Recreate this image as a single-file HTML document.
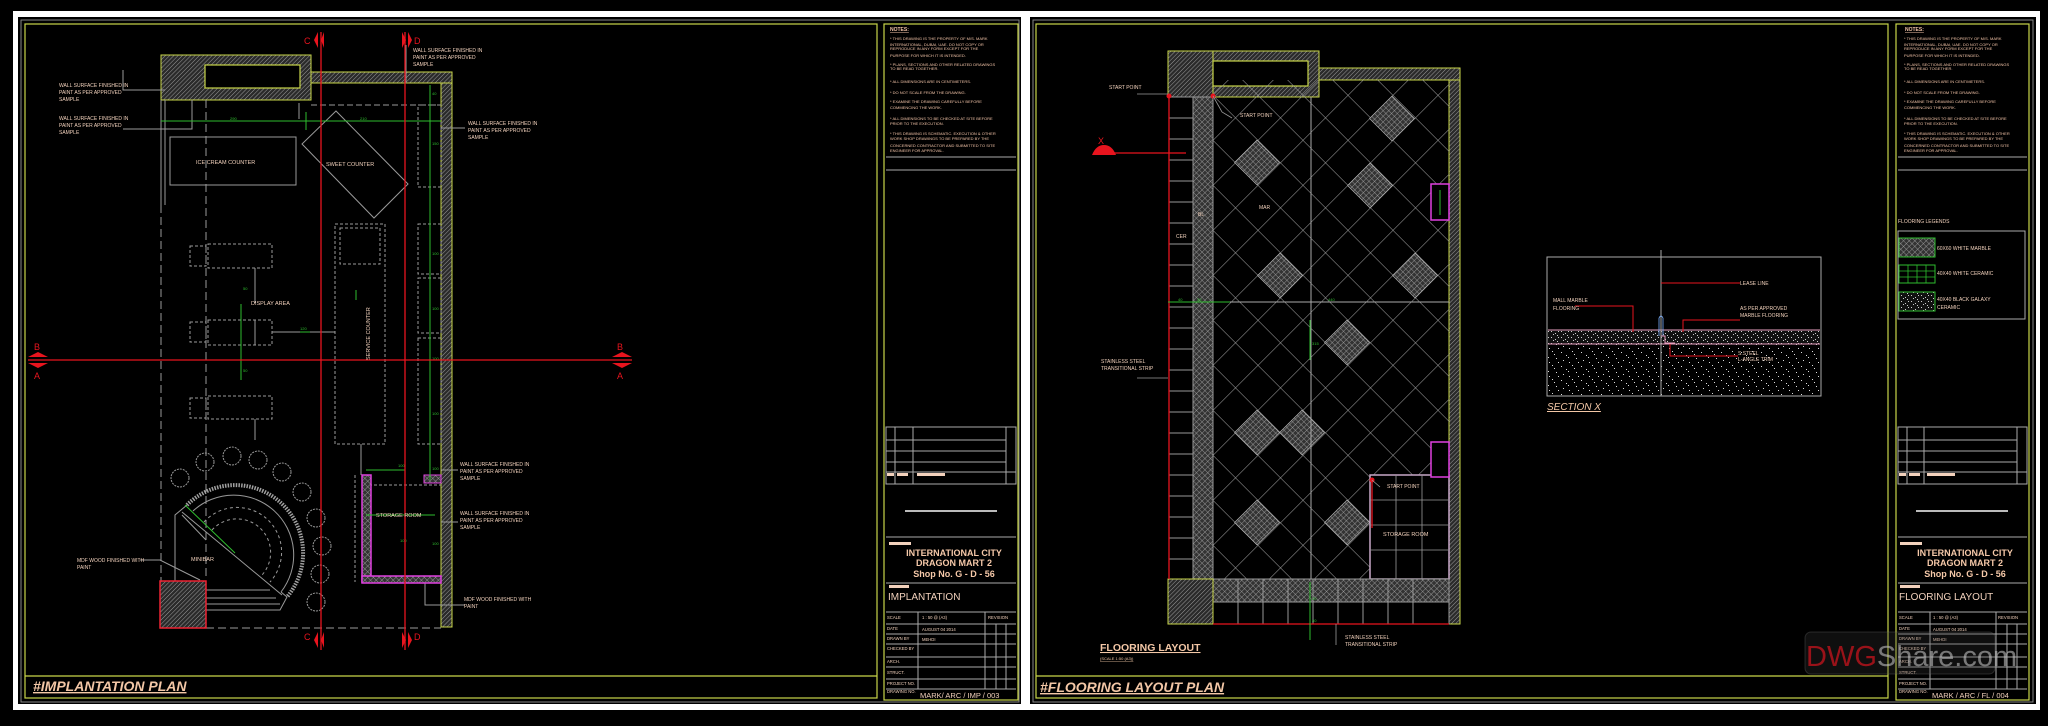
<!DOCTYPE html>
<html><head><meta charset="utf-8"><style>
html,body{margin:0;padding:0;background:#000;width:2048px;height:726px;overflow:hidden}
svg{display:block}
text{font-family:"Liberation Sans",sans-serif}
.lb{fill:#f3d2bd;font-size:5px}
.nt{fill:#f3c4a8;font-size:4px}
.tb{fill:#f3d2bd;font-size:4.2px}
</style></head><body>
<svg width="2048" height="726" viewBox="0 0 2048 726" xmlns="http://www.w3.org/2000/svg">
<defs>
<pattern id="hatch" width="3" height="3" patternUnits="userSpaceOnUse" patternTransform="rotate(45)">
<rect width="3" height="3" fill="#2a2a2a"/><line x1="0" y1="0" x2="0" y2="3" stroke="#9a9a9a" stroke-width="1"/></pattern>
<pattern id="cross" width="4" height="4" patternUnits="userSpaceOnUse" patternTransform="rotate(45)">
<rect width="4" height="4" fill="#333"/><path d="M0 0V4M0 0H4" stroke="#aaa" stroke-width="0.8"/></pattern>
<pattern id="speck" width="20" height="14" patternUnits="userSpaceOnUse">
<rect width="20" height="14" fill="#000"/>
<g fill="#ddd"><rect x="1" y="2" width="1" height="1"/><rect x="6" y="5" width="1" height="1"/><rect x="12" y="1" width="1" height="1"/><rect x="16" y="8" width="1" height="1"/><rect x="3" y="10" width="1" height="1"/><rect x="9" y="12" width="1" height="1"/><rect x="14" y="4" width="1" height="1"/><rect x="18" y="12" width="1" height="1"/><rect x="8" y="7" width="1" height="1"/></g></pattern>
<pattern id="speck2" width="10" height="6" patternUnits="userSpaceOnUse">
<rect width="10" height="6" fill="#111"/><g fill="#ccc"><rect x="1" y="1" width="1" height="1"/><rect x="5" y="3" width="1" height="1"/><rect x="8" y="1" width="1" height="1"/><rect x="3" y="4" width="1" height="1"/><rect x="7" y="5" width="1" height="1"/></g></pattern>
<pattern id="diag" width="31.82" height="31.82" patternUnits="userSpaceOnUse" patternTransform="translate(1258,140) rotate(45)">
<path d="M0 0H31.82M0 0V31.82" stroke="#a8a8a8" stroke-width="1" fill="none"/></pattern>
<clipPath id="floorclip"><rect x="1213" y="80" width="236" height="499"/></clipPath>
</defs>

<rect x="13" y="11" width="2027" height="699" fill="#fff"/>
<rect x="18" y="17" width="1003" height="687" fill="#000"/>
<rect x="1030" y="17" width="1006" height="687" fill="#000"/>
<rect x="21" y="20" width="998" height="682" fill="none" stroke="#888" stroke-width="1"/>
<rect x="1033" y="20" width="1000" height="682" fill="none" stroke="#888" stroke-width="1"/>

<!-- LEFT PANEL -->
<g fill="none" stroke="#c9d64a" stroke-width="1.2">
<rect x="25" y="24" width="852" height="674"/>
<line x1="25" y1="676" x2="877" y2="676"/>
<rect x="884" y="24" width="134" height="676"/>
</g>
<text x="33" y="691" fill="#f3c7a6" font-size="14" font-weight="bold" font-style="italic" text-decoration="underline">#IMPLANTATION PLAN</text>

<g stroke="#aaa" stroke-width="1" fill="none">
<line x1="886" y1="157" x2="1016" y2="157"/><line x1="886" y1="170" x2="1016" y2="170"/>
<rect x="886" y="427" width="130" height="57"/>
<line x1="886" y1="440" x2="1006" y2="440"/><line x1="886" y1="451" x2="1006" y2="451"/><line x1="886" y1="462" x2="1006" y2="462"/><line x1="886" y1="472" x2="1016" y2="472"/>
<line x1="895" y1="427" x2="895" y2="484"/><line x1="913" y1="427" x2="913" y2="484"/><line x1="1006" y1="427" x2="1006" y2="484"/>
<line x1="886" y1="537" x2="1016" y2="537"/><line x1="886" y1="583" x2="1016" y2="583"/><line x1="886" y1="612" x2="1016" y2="612"/>
<line x1="886" y1="624" x2="1016" y2="624"/><line x1="886" y1="634" x2="1016" y2="634"/><line x1="886" y1="644" x2="1016" y2="644"/><line x1="886" y1="657" x2="1016" y2="657"/><line x1="886" y1="667" x2="1016" y2="667"/><line x1="886" y1="679" x2="1016" y2="679"/><line x1="886" y1="689" x2="1016" y2="689"/>
<line x1="918" y1="612" x2="918" y2="689"/><line x1="985" y1="612" x2="985" y2="689"/><line x1="996" y1="624" x2="996" y2="689"/><line x1="1006" y1="624" x2="1006" y2="689"/>
</g>
<rect x="887" y="473" width="7" height="3" fill="#f3d2bd"/><rect x="897" y="473" width="11" height="3" fill="#f3d2bd"/><rect x="917" y="473" width="28" height="3" fill="#f3d2bd"/>
<line x1="905" y1="511" x2="997" y2="511" stroke="#bbb" stroke-width="2"/>
<rect x="889" y="542" width="22" height="3" fill="#f3d2bd"/><rect x="889" y="585" width="20" height="3" fill="#f3d2bd"/>
<g fill="#f6c9a9" font-weight="bold" font-size="9" text-anchor="middle">
<text x="954" y="556">INTERNATIONAL CITY</text><text x="954" y="566">DRAGON MART 2</text><text x="954" y="577">Shop No. G - D - 56</text></g>
<text x="888" y="600" fill="#f3d2bd" font-size="10">IMPLANTATION</text>
<g class="tb" font-size="3.5"><text x="887" y="619">SCALE</text><text x="922" y="619">1 : 50 @ (A3)</text><text x="988" y="619">REVISION</text>
<text x="887" y="630">DATE</text><text x="922" y="631">AUGUST 04 2014</text><text x="887" y="640">DRAWN BY</text><text x="922" y="641">MEHDI</text>
<text x="887" y="650">CHECKED BY</text><text x="887" y="663">ARCH.</text><text x="887" y="674">STRUCT.</text><text x="887" y="685">PROJECT NO.</text><text x="887" y="693">DRAWING NO.</text></g>
<text x="920" y="698" fill="#f3d2bd" font-size="7.5">MARK/ ARC / IMP / 003</text>

<g class="nt">
<text x="890" y="31" font-size="5" font-weight="bold" text-decoration="underline">NOTES:</text>
<text x="890" y="40">* THIS DRAWING IS THE PROPERTY OF M/S. MARK</text>
<text x="890" y="46">INTERNATIONAL, DUBAI, UAE. DO NOT COPY OR</text>
<text x="890" y="50">REPRODUCE IN ANY FORM EXCEPT FOR THE</text>
<text x="890" y="57">PURPOSE FOR WHICH IT IS INTENDED.</text>
<text x="890" y="66">* PLANS, SECTIONS AND OTHER RELATED DRAWINGS</text>
<text x="890" y="70">TO BE READ TOGETHER.</text>
<text x="890" y="83">* ALL DIMENSIONS ARE IN CENTIMETERS.</text>
<text x="890" y="94">* DO NOT SCALE FROM THE DRAWING.</text>
<text x="890" y="103">* EXAMINE THE DRAWING CAREFULLY BEFORE</text>
<text x="890" y="109">COMMENCING THE WORK.</text>
<text x="890" y="120">* ALL DIMENSIONS TO BE CHECKED AT SITE BEFORE</text>
<text x="890" y="125">PRIOR TO THE EXECUTION.</text>
<text x="890" y="135">* THIS DRAWING IS SCHEMATIC. EXECUTION &amp; OTHER</text>
<text x="890" y="140">WORK SHOP DRAWINGS TO BE PREPARED BY THE</text>
<text x="890" y="147">CONCERNED CONTRACTOR AND SUBMITTED TO SITE</text>
<text x="890" y="152">ENGINEER FOR APPROVAL.</text>
</g>

<rect x="161" y="55" width="150" height="45" fill="url(#hatch)" stroke="#c9d64a" stroke-width="1"/>
<rect x="205" y="65" width="95" height="23" fill="#000" stroke="#c9d64a" stroke-width="1.2"/>
<rect x="311" y="72" width="141" height="11" fill="url(#hatch)" stroke="#c9d64a" stroke-width="1"/>
<rect x="441" y="83" width="11" height="544" fill="url(#hatch)" stroke="#c9d64a" stroke-width="1"/>
<g stroke="#9a9a9a" stroke-width="1" fill="none">
<path d="M161 100V205M165 100V205"/>
<path d="M161 205V628M206 100V580" stroke-dasharray="8 4"/>
<path d="M206 628H441" stroke-dasharray="8 4"/>
<path d="M311 105H441" stroke-dasharray="6 3"/>
<rect x="170" y="137" width="126" height="48"/>
<path d="M336 111L408 184L374 218L302 144Z"/>
<g stroke-dasharray="3 2"><rect x="208" y="244" width="64" height="24"/><rect x="208" y="320" width="64" height="25"/><rect x="208" y="396" width="64" height="23"/>
<rect x="335" y="224" width="50" height="220"/><rect x="340" y="228" width="40" height="36"/><rect x="418" y="105" width="23" height="82"/><rect x="418" y="224" width="23" height="50"/><rect x="418" y="278" width="23" height="55"/><rect x="418" y="338" width="23" height="106"/>
<rect x="190" y="246" width="16" height="20"/><rect x="190" y="322" width="16" height="20"/><rect x="190" y="398" width="16" height="20"/>
<path d="M355 475V582M369 485H441"/></g>
<!-- minibar -->
<path d="M187 505 A68 68 0 0 1 287 597" stroke="#a0a0a0" stroke-dasharray="1.5 1.2" stroke-width="4"/>
<path d="M193 511 A60 60 0 0 1 281 592"/>
<path d="M204 522 A44 44 0 0 1 270 582" stroke-dasharray="3 3"/>
<path d="M212 530 A33 33 0 0 1 262 575" stroke-dasharray="3 3"/>
<path d="M187 505L175 515V585M182 515L206 540M182 512L282 595M281 592L287 597L280 610L206 610"/>
<path d="M206 590H270M206 598H276M206 604H280"/>
<g stroke-dasharray="2 1">
<circle cx="180" cy="478" r="9"/><circle cx="205" cy="462" r="9"/><circle cx="232" cy="456" r="9"/><circle cx="258" cy="460" r="9"/><circle cx="282" cy="472" r="9"/><circle cx="302" cy="492" r="9"/><circle cx="316" cy="518" r="9"/><circle cx="322" cy="546" r="9"/><circle cx="320" cy="574" r="9"/><circle cx="316" cy="602" r="9"/></g>
<path d="M165 90H123V70M192 100V129H123M299 103V119" />
<path d="M406 83V45M441 128H465M441 470H458M441 522H458M425 582V605H465M200 580L160 560H140"/>
<path d="M255 303L255 268M255 320L255 345M255 419L255 440M272 332H335M361 444V475"/>
</g>
<rect x="160" y="581" width="46" height="47" fill="url(#hatch)" stroke="#e23" stroke-width="1.5"/>
<rect x="362" y="475" width="9" height="107" fill="url(#cross)" stroke="#e040e0" stroke-width="1.5"/>
<rect x="362" y="576" width="79" height="7" fill="url(#cross)" stroke="#e040e0" stroke-width="1.5"/>
<rect x="424" y="475" width="17" height="8" fill="url(#cross)" stroke="#e040e0" stroke-width="1"/>
<g stroke="#2ebd2e" stroke-width="1" fill="none"><path d="M161 121H441M306 112V130M430 85V480M241 304V380M356 290V300M300 332H310M366 515H435M366 470H405M185 505L235 553"/></g>
<g fill="#2ebd2e" font-size="4"><text x="230" y="120">290</text><text x="360" y="120">210</text><text x="432" y="95">40</text><text x="432" y="145">150</text><text x="432" y="255">100</text><text x="432" y="310">100</text><text x="432" y="360">100</text><text x="432" y="415">100</text><text x="432" y="470">100</text><text x="432" y="545">100</text><text x="243" y="290">50</text><text x="243" y="372">50</text><text x="300" y="330">120</text><text x="398" y="467">100</text><text x="400" y="542">100</text></g>
<g stroke="#e8141e" stroke-width="1.3"><line x1="321" y1="32" x2="321" y2="650"/><line x1="405" y1="32" x2="405" y2="650"/><line x1="28" y1="360" x2="632" y2="360"/></g>
<g fill="#e8141e"><path d="M318 32L314 40L318 48ZM324 32V48L321 40Z"/><path d="M318 632L314 640L318 648ZM324 632V648L321 640Z"/><path d="M402 32V48L406 40Z M408 32L412 40L408 48Z"/><path d="M402 632V648L406 640Z M408 632L412 640L408 648Z"/>
<path d="M28 357L38 352L48 357ZM28 363L38 368L48 363Z"/><path d="M612 357L622 352L632 357ZM612 363L622 368L632 363Z"/></g>
<g fill="#e8141e" font-size="9"><text x="304" y="44">C</text><text x="414" y="44">D</text><text x="304" y="640">C</text><text x="414" y="640">D</text><text x="34" y="350">B</text><text x="34" y="379">A</text><text x="617" y="350">B</text><text x="617" y="379">A</text></g>
<g class="lb" font-size="4.6">
<text x="59" y="87">WALL SURFACE FINISHED IN</text><text x="59" y="94">PAINT AS PER APPROVED</text><text x="59" y="101">SAMPLE</text>
<text x="59" y="120">WALL SURFACE FINISHED IN</text><text x="59" y="127">PAINT AS PER APPROVED</text><text x="59" y="134">SAMPLE</text>
<text x="413" y="52">WALL SURFACE FINISHED IN</text><text x="413" y="59">PAINT AS PER APPROVED</text><text x="413" y="66">SAMPLE</text>
<text x="468" y="125">WALL SURFACE FINISHED IN</text><text x="468" y="132">PAINT AS PER APPROVED</text><text x="468" y="139">SAMPLE</text>
<text x="460" y="466">WALL SURFACE FINISHED IN</text><text x="460" y="473">PAINT AS PER APPROVED</text><text x="460" y="480">SAMPLE</text>
<text x="460" y="515">WALL SURFACE FINISHED IN</text><text x="460" y="522">PAINT AS PER APPROVED</text><text x="460" y="529">SAMPLE</text>
<text x="464" y="601">MDF WOOD FINISHED WITH</text><text x="464" y="608">PAINT</text>
<text x="77" y="562">MDF WOOD FINISHED WITH</text><text x="77" y="569">PAINT</text>
<text x="196" y="164" font-size="5.5">ICE CREAM COUNTER</text><text x="326" y="166" font-size="5.5">SWEET COUNTER</text>
<text x="251" y="305" font-size="5.5">DISPLAY AREA</text><text x="376" y="517" font-size="5.5">STORAGE ROOM</text><text x="191" y="561" font-size="5.5">MINIBAR</text>
<text transform="translate(370,360) rotate(-90)" font-size="5.5">SERVICE COUNTER</text>
</g>

<!-- RIGHT PANEL -->
<g fill="none" stroke="#c9d64a" stroke-width="1.2">
<rect x="1036" y="24" width="852" height="674"/>
<line x1="1036" y1="676" x2="1888" y2="676"/>
<rect x="1896" y="24" width="133" height="676"/>
</g>
<text x="1040" y="692" fill="#f3c7a6" font-size="14" font-weight="bold" font-style="italic" text-decoration="underline">#FLOORING LAYOUT PLAN</text>

<g stroke="#aaa" stroke-width="1" fill="none">
<line x1="1898" y1="157" x2="2027" y2="157"/><line x1="1898" y1="170" x2="2027" y2="170"/>
<rect x="1898" y="427" width="129" height="57"/>
<line x1="1898" y1="440" x2="2017" y2="440"/><line x1="1898" y1="451" x2="2017" y2="451"/><line x1="1898" y1="462" x2="2017" y2="462"/><line x1="1898" y1="472" x2="2027" y2="472"/>
<line x1="1907" y1="427" x2="1907" y2="484"/><line x1="1924" y1="427" x2="1924" y2="484"/><line x1="2017" y1="427" x2="2017" y2="484"/>
<line x1="1898" y1="537" x2="2027" y2="537"/><line x1="1898" y1="583" x2="2027" y2="583"/><line x1="1898" y1="612" x2="2027" y2="612"/>
<line x1="1898" y1="624" x2="2027" y2="624"/><line x1="1898" y1="634" x2="2027" y2="634"/><line x1="1898" y1="644" x2="2027" y2="644"/><line x1="1898" y1="657" x2="2027" y2="657"/><line x1="1898" y1="667" x2="2027" y2="667"/><line x1="1898" y1="679" x2="2027" y2="679"/><line x1="1898" y1="689" x2="2027" y2="689"/>
<line x1="1930" y1="612" x2="1930" y2="689"/><line x1="1996" y1="612" x2="1996" y2="689"/><line x1="2007" y1="624" x2="2007" y2="689"/><line x1="2017" y1="624" x2="2017" y2="689"/>
<rect x="1898" y="231" width="127" height="88"/>
</g>
<rect x="1899" y="473" width="7" height="3" fill="#f3d2bd"/><rect x="1909" y="473" width="11" height="3" fill="#f3d2bd"/><rect x="1927" y="473" width="28" height="3" fill="#f3d2bd"/>
<line x1="1916" y1="511" x2="2008" y2="511" stroke="#bbb" stroke-width="2"/>
<rect x="1900" y="542" width="22" height="3" fill="#f3d2bd"/><rect x="1900" y="585" width="20" height="3" fill="#f3d2bd"/>
<g fill="#f6c9a9" font-weight="bold" font-size="9" text-anchor="middle">
<text x="1965" y="556">INTERNATIONAL CITY</text><text x="1965" y="566">DRAGON MART 2</text><text x="1965" y="577">Shop No. G - D - 56</text></g>
<text x="1899" y="600" fill="#f3d2bd" font-size="10">FLOORING LAYOUT</text>
<g class="tb" font-size="3.5"><text x="1899" y="619">SCALE</text><text x="1933" y="619">1 : 50 @ (A3)</text><text x="1998" y="619">REVISION</text>
<text x="1899" y="630">DATE</text><text x="1933" y="631">AUGUST 04 2014</text><text x="1899" y="640">DRAWN BY</text><text x="1933" y="641">MEHDI</text>
<text x="1899" y="650">CHECKED BY</text><text x="1899" y="663">ARCH.</text><text x="1899" y="674">STRUCT.</text><text x="1899" y="685">PROJECT NO.</text><text x="1899" y="693">DRAWING NO.</text></g>
<text x="1932" y="698" fill="#f3d2bd" font-size="7.5">MARK / ARC / FL / 004</text>
<g class="nt">
<text x="1905" y="31" font-size="5" font-weight="bold" text-decoration="underline">NOTES:</text>
<text x="1904" y="40">* THIS DRAWING IS THE PROPERTY OF M/S. MARK</text>
<text x="1904" y="46">INTERNATIONAL, DUBAI, UAE. DO NOT COPY OR</text>
<text x="1904" y="50">REPRODUCE IN ANY FORM EXCEPT FOR THE</text>
<text x="1904" y="57">PURPOSE FOR WHICH IT IS INTENDED.</text>
<text x="1904" y="66">* PLANS, SECTIONS AND OTHER RELATED DRAWINGS</text>
<text x="1904" y="70">TO BE READ TOGETHER.</text>
<text x="1904" y="83">* ALL DIMENSIONS ARE IN CENTIMETERS.</text>
<text x="1904" y="94">* DO NOT SCALE FROM THE DRAWING.</text>
<text x="1904" y="103">* EXAMINE THE DRAWING CAREFULLY BEFORE</text>
<text x="1904" y="109">COMMENCING THE WORK.</text>
<text x="1904" y="120">* ALL DIMENSIONS TO BE CHECKED AT SITE BEFORE</text>
<text x="1904" y="125">PRIOR TO THE EXECUTION.</text>
<text x="1904" y="135">* THIS DRAWING IS SCHEMATIC. EXECUTION &amp; OTHER</text>
<text x="1904" y="140">WORK SHOP DRAWINGS TO BE PREPARED BY THE</text>
<text x="1904" y="147">CONCERNED CONTRACTOR AND SUBMITTED TO SITE</text>
<text x="1904" y="152">ENGINEER FOR APPROVAL.</text>
</g>
<text x="1898" y="223" class="lb" font-size="5.5">FLOORING LEGENDS</text>
<rect x="1899" y="238" width="36" height="19" fill="url(#cross)" stroke="#2ebd2e"/>
<rect x="1899" y="265" width="36" height="18" fill="#000" stroke="#2ebd2e"/>
<path d="M1899 271H1935M1899 277H1935M1908 265V283M1917 265V283M1926 265V283" stroke="#2ebd2e" stroke-width="0.8"/>
<rect x="1899" y="292" width="36" height="19" fill="url(#speck2)" stroke="#2ebd2e"/>
<g class="lb" font-size="5.5"><text x="1937" y="250">60X60 WHITE MARBLE</text><text x="1937" y="275">40X40 WHITE CERAMIC</text><text x="1937" y="301">40X40 BLACK GALAXY</text><text x="1937" y="309">CERAMIC</text></g>

<rect x="1168" y="51" width="45" height="46" fill="url(#hatch)" stroke="#c9d64a"/>
<rect x="1213" y="51" width="106" height="46" fill="url(#hatch)" stroke="#c9d64a"/>
<rect x="1213" y="61" width="95" height="25" fill="#000" stroke="#c9d64a" stroke-width="1.2"/>
<rect x="1319" y="68" width="141" height="12" fill="url(#hatch)" stroke="#c9d64a"/>
<rect x="1449" y="80" width="11" height="544" fill="url(#hatch)" stroke="#c9d64a"/>
<rect x="1193" y="97" width="20" height="482" fill="url(#cross)" stroke="#999"/>
<rect x="1169" y="97" width="24" height="482" fill="#000" stroke="#999"/>
<path stroke="#999" d="M1169 118H1193M1169 139H1193M1169 160H1193M1169 181H1193M1169 202H1193M1169 223H1193M1169 244H1193M1169 265H1193M1169 286H1193M1169 307H1193M1169 328H1193M1169 349H1193M1169 370H1193M1169 391H1193M1169 412H1193M1169 433H1193M1169 454H1193M1169 475H1193M1169 496H1193M1169 517H1193M1169 538H1193M1169 559H1193"/>
<g clip-path="url(#floorclip)">
<rect x="1213" y="80" width="236" height="499" fill="url(#diag)"/>
<g fill="url(#cross)" stroke="#bbb" stroke-width="0.6">
<path d="M1257 140l22.5 22.5l-22.5 22.5l-22.5-22.5Z"/>
<path d="M1392 96l22.5 22.5l-22.5 22.5l-22.5-22.5Z"/>
<path d="M1370 163l22.5 22.5l-22.5 22.5l-22.5-22.5Z"/>
<path d="M1280 253l22.5 22.5l-22.5 22.5l-22.5-22.5Z"/>
<path d="M1415 253l22.5 22.5l-22.5 22.5l-22.5-22.5Z"/>
<path d="M1347 320l22.5 22.5l-22.5 22.5l-22.5-22.5Z"/>
<path d="M1257 410l22.5 22.5l-22.5 22.5l-22.5-22.5Z"/>
<path d="M1302 410l22.5 22.5l-22.5 22.5l-22.5-22.5Z"/>
<path d="M1257 500l22.5 22.5l-22.5 22.5l-22.5-22.5Z"/>
<path d="M1347 500l22.5 22.5l-22.5 22.5l-22.5-22.5Z"/>
</g></g>
<path d="M1311 97V579M1169 302H1449" stroke="#aaa" stroke-width="1"/>
<rect x="1370" y="475" width="79" height="104" fill="#000" stroke="#c8a8c8" stroke-width="1.5"/>
<path d="M1370 500H1449M1370 525H1449M1370 550H1449M1396 475V579M1422 475V579" stroke="#999" stroke-width="0.8"/>
<rect x="1431" y="184" width="18" height="36" fill="#000" stroke="#e040e0" stroke-width="1.5"/>
<rect x="1431" y="442" width="18" height="35" fill="#000" stroke="#e040e0" stroke-width="1.5"/>
<rect x="1213" y="579" width="236" height="23" fill="url(#cross)" stroke="#999"/>
<rect x="1213" y="602" width="236" height="22" fill="#000" stroke="#999"/>
<path stroke="#999" d="M1238 602V624M1263 602V624M1288 602V624M1313 602V624M1338 602V624M1363 602V624M1388 602V624M1413 602V624M1238 579V602M1263 579V602M1288 579V602M1313 579V602M1338 579V602M1363 579V602M1388 579V602M1413 579V602"/>
<rect x="1168" y="579" width="45" height="45" fill="url(#hatch)" stroke="#c9d64a"/>
<g stroke="#e8141e" stroke-width="1.3" fill="none"><path d="M1169 96V579M1213 624H1449M1098 153H1186M1372 480V528"/></g>
<path d="M1092 155Q1096 145 1104 145Q1112 145 1116 155Z" fill="#e8141e"/>
<text x="1098" y="144" fill="#e8141e" font-size="9">X</text>
<circle cx="1169" cy="96" r="2.5" fill="#e8141e"/><circle cx="1213" cy="96" r="2.5" fill="#e8141e"/><circle cx="1372" cy="480" r="2.5" fill="#e8141e"/>
<g stroke="#999" stroke-width="0.8" fill="none"><path d="M1213 96L1222 112L1232 118M1137 94H1168M1137 378H1168M1336 624V645M1372 480L1380 487"/></g>
<g stroke="#2ebd2e" stroke-width="1" fill="none"><path d="M1168 302H1230M1310 320V360M1310 582V640M1440 190V215"/></g>
<g fill="#2ebd2e" font-size="4"><text x="1178" y="301">40</text><text x="1197" y="301">30</text><text x="1328" y="301">440</text><text x="1312" y="345">315</text><text x="1312" y="600">20</text><text x="1312" y="622">40</text></g>
<g class="lb" font-size="4.6">
<text x="1109" y="89">START POINT</text><text x="1240" y="117">START POINT</text><text x="1259" y="209">MAR</text><text x="1176" y="238">CER</text><text x="1198" y="216">BL</text>
<text x="1101" y="363">STAINLESS STEEL</text><text x="1101" y="370">TRANSITIONAL STRIP</text>
<text x="1345" y="639">STAINLESS STEEL</text><text x="1345" y="646">TRANSITIONAL STRIP</text>
<text x="1387" y="488">START POINT</text><text x="1383" y="536" font-size="5.5">STORAGE ROOM</text>
</g>
<text x="1100" y="651" fill="#f3c7a6" font-size="10.5" font-weight="bold" text-decoration="underline">FLOORING LAYOUT</text>
<text x="1100" y="660" fill="#f3c7a6" font-size="4" text-decoration="underline">(SCALE 1:50 (A3))</text>

<rect x="1547" y="257" width="274" height="139" fill="#000" stroke="#aaa"/>
<rect x="1548" y="330" width="272" height="14" fill="url(#speck2)"/>
<rect x="1548" y="344" width="272" height="51" fill="url(#speck)"/>
<path d="M1548 330H1820M1548 344H1820" stroke="#e8a0c0" stroke-width="1"/>
<path d="M1661 250V396" stroke="#aaa"/>
<path d="M1659 318V336M1663 318V336M1659 318Q1661 314 1663 318" stroke="#7ab0ff" fill="none" stroke-width="0.8"/>
<path d="M1661 336H1665V343H1675" stroke="#e8a0c0" fill="none"/>
<g stroke="#e8141e" stroke-width="1" fill="none"><path d="M1661 283H1740M1575 306H1633V332M1683 332V320H1740M1670 344V356H1738"/></g>
<g class="lb" font-size="4.6"><text x="1740" y="285">LEASE LINE</text><text x="1553" y="302">MALL MARBLE</text><text x="1553" y="310">FLOORING</text><text x="1740" y="310">AS PER APPROVED</text><text x="1740" y="317">MARBLE FLOORING</text><text x="1738" y="355">S.STEEL</text><text x="1738" y="361">L-ANGLE TRIM</text></g>
<text x="1547" y="410" fill="#f3c7a6" font-size="10" font-style="italic" text-decoration="underline">SECTION X</text>

<rect x="1805" y="632" width="190" height="42" rx="6" fill="rgba(60,60,60,0.25)" stroke="rgba(120,120,120,0.3)"/>
<text x="1806" y="666" font-size="29" fill="rgba(200,20,30,0.75)">DWG<tspan fill="rgba(190,190,190,0.6)">Share.com</tspan></text>
</svg>
</body></html>
